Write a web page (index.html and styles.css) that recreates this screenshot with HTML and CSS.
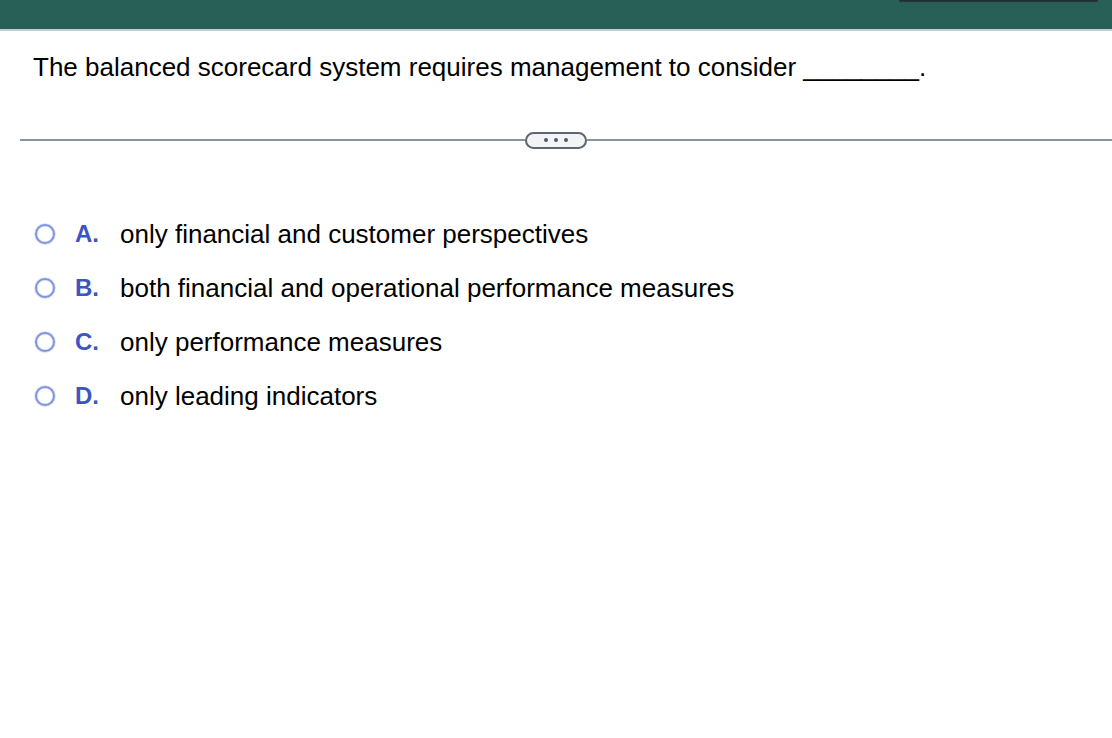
FILE: index.html
```html
<!DOCTYPE html>
<html lang="en">
<head>
<meta charset="utf-8">
<title>Question</title>
<link rel="stylesheet" href="styles.css">
</head>
<body>
<header class="topbar">
  <div class="topbar-tab"></div>
</header>
<main class="content">
  <p class="question">The balanced scorecard system requires management to consider ________.</p>
  <div class="divider">
    <span class="divider-line divider-left"></span>
    <button class="more" type="button" aria-label="more"><span class="dot"></span><span class="dot"></span><span class="dot"></span></button>
    <span class="divider-line"></span>
  </div>
  <ul class="options">
    <li class="option"><span class="radio"></span><span class="letter">A.</span><span class="answer">only financial and customer perspectives</span></li>
    <li class="option"><span class="radio"></span><span class="letter">B.</span><span class="answer">both financial and operational performance measures</span></li>
    <li class="option"><span class="radio"></span><span class="letter">C.</span><span class="answer">only performance measures</span></li>
    <li class="option"><span class="radio"></span><span class="letter">D.</span><span class="answer">only leading indicators</span></li>
  </ul>
</main>
</body>
</html>
```
FILE: styles.css
```css
* { box-sizing: border-box; }
html, body { margin: 0; padding: 0; background: #ffffff; }
body {
  font-family: "Liberation Sans", Arial, sans-serif;
  color: #000000;
  width: 1112px;
  height: 738px;
  overflow: hidden;
}
.topbar {
  position: relative;
  height: 31px;
  background: #285f57;
  border-bottom: 2px solid #c3cdd1;
}
.topbar-tab {
  position: absolute;
  left: 899px;
  top: 0;
  width: 199px;
  height: 1px;
  background: #262c35;
  box-shadow: 0 1px 1px rgba(20, 25, 30, 0.6);
  border-radius: 0 0 2px 2px;
}
.content { padding: 0; }
.question {
  margin: 21px 0 0 33px;
  font-size: 26px;
  line-height: 30px;
}
.divider {
  display: grid;
  grid-template-columns: 1fr auto 1fr;
  align-items: center;
  margin-top: 49px;
  height: 18px;
}
.divider-line {
  height: 2px;
  background: #8a939e;
}
.divider-left { margin-left: 20px; }
.more {
  width: 62px;
  height: 17px;
  border: 2px solid #5b6573;
  border-radius: 9px;
  background: #f2f3f5;
  display: flex;
  align-items: center;
  justify-content: center;
  gap: 6px;
  padding: 0;
}
.dot {
  width: 4px;
  height: 4px;
  border-radius: 50%;
  background: #4f5966;
}
.options {
  list-style: none;
  margin: 58px 0 0 0;
  padding: 0;
}
.option {
  display: flex;
  align-items: center;
  height: 54px;
  font-size: 26px;
}
.radio {
  width: 20px;
  height: 20px;
  border: 2.5px solid #8093dd;
  border-radius: 50%;
  margin-left: 35px;
  flex: none;
  box-shadow: 0 0 1px 0.5px rgba(110, 130, 215, 0.45), inset 0 0 1px 0.5px rgba(110, 130, 215, 0.3);
}
.letter {
  color: #3b56c4;
  font-weight: bold;
  font-size: 24px;
  margin-left: 20px;
  width: 45px;
}
.answer { color: #000; }
```
